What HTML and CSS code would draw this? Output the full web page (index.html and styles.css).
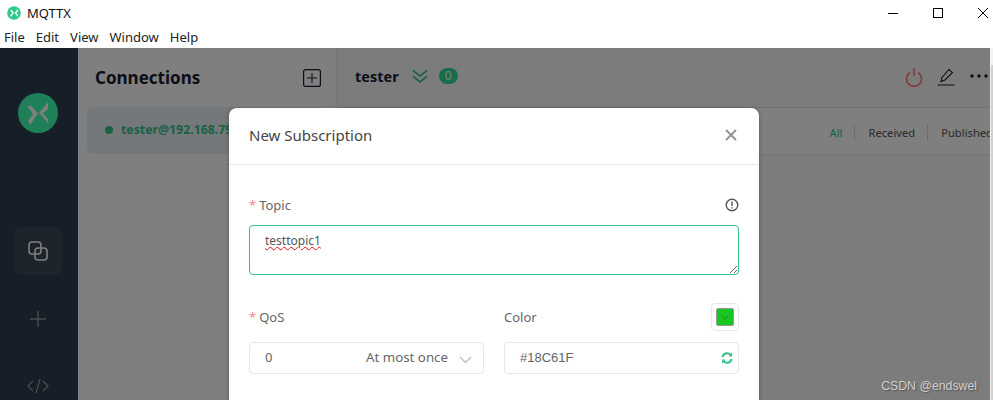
FILE: index.html
```html
<!DOCTYPE html>
<html lang="en">
<head>
    <meta charset="UTF-8">
    <title>MQTTX</title>
    <link rel="stylesheet" href="styles.css">
</head>
<body>
    <div class="titlebar">
        <svg class="app-icon" width="14" height="14" viewBox="0 0 14 14">
            <circle cx="7" cy="7" r="6.800" fill="#2fc98b"/>
            <path d="M3 4.200L4.500 3.800 7 6.800 4.200 10.800 3 9.800 5.300 7zM11 2.800V5L9.200 7 11 9V11L7.500 7z" fill="#fff"/>
        </svg>
        <span class="app-name">MQTTX</span>
        <div class="win-btns">
            <svg width="12" height="12" viewBox="0 0 12 12"><path d="M1 6.500h10" stroke="#000" fill="none"/></svg>
            <svg width="12" height="12" viewBox="0 0 12 12"><rect x="1.500" y="1.500" width="9" height="9" stroke="#000" fill="none"/></svg>
            <svg width="12" height="12" viewBox="0 0 12 12"><path d="M1 1l10 10M11 1L1 11" stroke="#000" fill="none"/></svg>
        </div>
    </div>
    <div class="menubar">
        <span>File</span><span>Edit</span><span>View</span><span>Window</span><span>Help</span>
    </div>

    <div class="app">
        <aside class="rail">
            <svg class="rail-logo" width="40" height="40" viewBox="0 0 40 40">
                <circle cx="20" cy="20" r="20" fill="#3fffb0"/>
                <path d="M9.500 13L13 12.500 20 20.500 12 32 10 28 15 21zM30 9V16L25 20 30 26V30L21 20z" fill="#fff"/>
            </svg>
            <div class="rail-item">
                <svg width="20" height="20" viewBox="0 0 20 20" fill="none" stroke="#fff" stroke-width="1.600">
                    <rect x="1" y="1" width="12" height="12" rx="3"/>
                    <rect x="7" y="7" width="12" height="12" rx="3"/>
                </svg>
            </div>
            <svg class="rail-plus" width="18" height="18" viewBox="0 0 18 18"><path d="M9 1v16M1 9h16" stroke="#92979c" stroke-width="1.400"/></svg>
            <svg class="rail-code" width="22" height="14" viewBox="0 0 22 14" fill="none" stroke="#92979c" stroke-width="1.300"><path d="M6 2L1 7l5 5M16 2l5 5-5 5M13 0L9 14"/></svg>
        </aside>

        <section class="conn-list">
            <div class="conn-head">
                <h2>Connections</h2>
                <svg width="18" height="18" viewBox="0 0 18 18" fill="none"><rect x="0.600" y="0.600" width="16.800" height="16.800" rx="2" stroke="#1a1a2e" stroke-width="1.200"/><path d="M9 4v10M4 9h10" stroke="#1a1a2e"/></svg>
            </div>
            <div class="conn-item"><i class="dot"></i><span>tester@192.168.79</span></div>
        </section>

        <main class="main">
            <div class="main-head">
                <span class="conn-name">tester</span>
                <svg class="chevrons" width="16" height="15" viewBox="0 0 16 15" fill="none" stroke="#34c388" stroke-width="1.600"><path d="M1 1.500l7 5.500 7-5.500M1 7.500l7 5.500 7-5.500"/></svg>
                <span class="badge">0</span>
                <div class="head-actions">
                    <svg class="power" width="18" height="19" viewBox="0 0 18 19" fill="none" stroke="#ff7070" stroke-width="1.500"><path d="M5 4.500a7.500 7.500 0 1 0 8 0M9 0v8"/></svg>
                    <svg class="pencil" width="18" height="18" viewBox="0 0 18 18" fill="none" stroke="#1a1a2e" stroke-width="1.100"><path d="M4 13.500l1-4L12 1.500l3.500 3L8 12zM0.500 17h17"/></svg>
                    <svg width="18" height="4" viewBox="0 0 18 4" fill="#1a1a2e"><circle cx="2" cy="2" r="1.700"/><circle cx="9" cy="2" r="1.700"/><circle cx="16" cy="2" r="1.700"/></svg>
                </div>
            </div>
            <div class="main-tabs">
                <span class="tab-on">All</span><span>Received</span><span>Published</span>
            </div>
        </main>

        <div class="overlay"></div>
        <div class="scroll-strip"></div>

        <div class="modal">
            <div class="modal-head">
                <span>New Subscription</span>
                <svg width="12" height="12" viewBox="0 0 12 12"><path d="M1 1l10 10M11 1L1 11" stroke="#8f9399" stroke-width="1.800"/></svg>
            </div>
            <div class="modal-body">
                <div class="label-row">
                    <label><em>*</em>Topic</label>
                    <svg width="14" height="14" viewBox="0 0 14 14" fill="none" stroke="#555" stroke-width="1.400"><circle cx="7" cy="7" r="5.800"/><path d="M7 3.500v4.500M7 9.300v1.300"/></svg>
                </div>
                <div class="topic-input"><span class="squiggle">testtopic1</span></div>

                <div class="form-grid">
                    <div>
                        <div class="label-row"><label><em>*</em>QoS</label></div>
                        <div class="field">
                            <span>0</span>
                            <span class="qos-text">At most once</span>
                            <svg class="qos-arrow" width="13" height="8" viewBox="0 0 13 8" fill="none" stroke="#c0c4cc" stroke-width="1.500"><path d="M1 1l5.500 5.500L12 1"/></svg>
                        </div>
                    </div>
                    <div>
                        <div class="label-row">
                            <label>Color</label>
                            <div class="color-btn"><div class="swatch"><svg width="8" height="5" viewBox="0 0 8 5" fill="none" stroke="#2e7d32"><path d="M.5.500L4 4 7.500.500"/></svg></div></div>
                        </div>
                        <div class="field">
                            <span class="hex">#18C61F</span>
                            <svg class="refresh" width="12" height="12" viewBox="0 0 12 12" fill="none" stroke="#34c388" stroke-width="2"><path d="M1.500 5A4.600 4.600 0 0 1 10 3.500M10.500 7A4.600 4.600 0 0 1 2 8.500"/><path d="M11 0.500v4H7.500zM1 11.500v-4h3.500z" fill="#34c388" stroke="none"/></svg>
                        </div>
                    </div>
                </div>
            </div>
        </div>

        <div class="watermark">CSDN @endswel</div>
    </div>
</body>
</html>
```

FILE: styles.css
```css
body {
    margin: 0;
    width: 993px;
    height: 400px;
    overflow: hidden;
    background: #fff;
    font-family: "Noto Sans", sans-serif;
    color: #333;
}

.titlebar {
    height: 26px;
    display: flex;
    align-items: center;
    padding-left: 7px;
}

.app-icon {
    margin-right: 6px;
}

.app-name {
    font-size: 13px;
    color: #111;
}

.win-btns {
    margin-left: auto;
    display: flex;
    gap: 33px;
    padding-right: 4px;
}

.menubar {
    height: 22px;
    display: flex;
    align-items: center;
    padding-left: 4px;
    gap: 11px;
    font-size: 13px;
    color: #222;
}

/* main window */
.app {
    position: relative;
    height: 352px;
    display: flex;
    overflow: hidden;
}

.rail {
    width: 78px;
    flex: none;
    background: #2c3c4e;
    display: flex;
    flex-direction: column;
    align-items: center;
    padding: 45px 2px 0 0;
    box-sizing: border-box;
}

.rail-item {
    width: 48px;
    height: 48px;
    margin-top: 94px;
    border-radius: 8px;
    background: #3a4856;
    display: flex;
    align-items: center;
    justify-content: center;
}

.rail-plus {
    margin-top: 35px;
}

.rail-code {
    margin-top: 51px;
    flex: none;
}

.conn-list {
    width: 260px;
    flex: none;
    background: #fff;
    border-right: 2px solid #f0f0f4;
    box-sizing: border-box;
}

.conn-head {
    height: 59px;
    display: flex;
    align-items: center;
    justify-content: space-between;
    padding: 0 15px 0 17px;
}

.conn-head h2 {
    margin: 0;
    font-size: 17px;
    font-weight: 700;
    color: #1a1a2e;
}

.conn-item {
    margin: 0 9px;
    height: 47px;
    border-radius: 6px;
    background: #e8f0f4;
    display: flex;
    align-items: center;
    padding-left: 18px;
    padding-bottom: 2px;
    box-sizing: border-box;
    font-size: 12.300px;
    font-weight: 700;
    color: #34c388;
    white-space: nowrap;
    overflow: hidden;
}

.dot {
    width: 8px;
    height: 8px;
    border-radius: 50%;
    background: #34c388;
    margin-right: 8px;
    flex: none;
}

.main {
    flex: 1;
    min-width: 0;
    background: #f9f9f9;
}

.main-head {
    height: 56px;
    border-bottom: 1px solid #e4e6f0;
    display: flex;
    align-items: center;
    padding: 0 2px 3px 17px;
}

.conn-name {
    font-size: 14.500px;
    font-weight: 700;
    color: #1a1a2e;
}

.chevrons {
    margin-left: 13px;
}

.badge {
    margin-left: 11px;
    width: 19px;
    height: 16px;
    border-radius: 8px;
    background: #2bdc90;
    color: #fff;
    font-size: 12px;
    line-height: 16px;
    text-align: center;
}

.head-actions {
    margin-left: auto;
    margin-right: 3px;
    display: flex;
    align-items: center;
    gap: 15px;
}

.power {
    margin-top: 3px;
}

.pencil {
    margin-left: -1px;
    margin-top: 2px;
}

.main-tabs {
    height: 46px;
    background: #fff;
    box-shadow: 0 1px 4px rgba(0, 0, 0, 0.06);
    display: flex;
    justify-content: flex-end;
    align-items: center;
    padding-top: 4px;
    box-sizing: border-box;
    font-size: 11.200px;
    color: #555;
    white-space: nowrap;
}

.main-tabs span {
    padding: 0 12px 0 13px;
    border-left: 1px solid #d8d8e0;
    line-height: 16px;
}

.main-tabs span:last-child {
    padding-right: 0;
}

.main-tabs .tab-on {
    color: #34c388;
    border-left: none;
}

.overlay {
    position: absolute;
    inset: 0;
    background: rgba(0, 0, 0, 0.5);
}

.scroll-strip {
    position: absolute;
    right: 0;
    top: 0;
    bottom: 0;
    width: 3px;
    background: linear-gradient(#f2f2f2 17px, #d0d0d0 17px);
    border-left: 1px solid #f2f2f2;
    box-sizing: border-box;
}

/* dialog */
.modal {
    position: absolute;
    left: 229px;
    top: 60px;
    width: 530px;
    height: 400px;
    background: #fff;
    border-radius: 8px;
    box-shadow: 0 1px 4px rgba(0, 0, 0, 0.3);
}

.modal-head {
    height: 57px;
    border-bottom: 1px solid #e4e6f0;
    padding-bottom: 2px;
    box-sizing: border-box;
    display: flex;
    align-items: center;
    justify-content: space-between;
    padding-left: 20px;
    padding-right: 22px;
    font-size: 15px;
    color: #444;
}

.modal-body {
    padding: 29px 20px 0;
    font-size: 13px;
    color: #666;
}

.label-row {
    display: flex;
    align-items: center;
    justify-content: space-between;
    height: 22px;
    margin-bottom: 9px;
}

.label-row label {
    font-size: 13px;
}

.label-row em {
    font-style: normal;
    color: #f58a8a;
    margin-right: 3px;
}

.topic-input {
    height: 50px;
    box-sizing: border-box;
    border: 1px solid #34c388;
    border-radius: 4px;
    padding: 5px 15px;
    font-size: 12px;
    line-height: 20px;
    resize: both;
    overflow: auto;
    color: #555;
}

.squiggle {
    text-decoration: underline wavy #e81010 1px;
    text-underline-offset: 1px;
}

.form-grid {
    display: grid;
    grid-template-columns: 235px 235px;
    gap: 20px;
    margin-top: 28px;
}

.form-grid .label-row {
    height: 28px;
    margin-bottom: 11px;
}

.field {
    height: 32px;
    border: 1px solid #e4e6f0;
    border-radius: 4px;
    box-sizing: border-box;
    display: flex;
    align-items: center;
    padding: 0 11px 2px 15px;
}

.qos-text {
    margin-left: auto;
    margin-right: 11px;
    font-size: 13.300px;
}

.qos-arrow {
    margin-top: 5px;
}

.hex {
    font-family: "Liberation Sans", sans-serif;
    font-size: 13px;
    color: #666;
}

.refresh {
    margin-left: auto;
    margin-right: -6px;
    margin-top: 2px;
}

.color-btn {
    width: 28px;
    height: 28px;
    border: 1px solid #e6e6e6;
    border-radius: 4px;
    box-sizing: border-box;
    display: flex;
    align-items: center;
    justify-content: center;
}

.swatch {
    width: 18px;
    height: 18px;
    background: #18c61f;
    border: 1px solid #999;
    border-radius: 2px;
    box-sizing: border-box;
    display: flex;
    align-items: center;
    justify-content: center;
}

.watermark {
    position: absolute;
    right: 16px;
    bottom: 7px;
    font-family: "Liberation Sans", sans-serif;
    font-size: 12.300px;
    color: #d0d0d0;
    text-shadow: 1px 1px 1px #555;
}
```
